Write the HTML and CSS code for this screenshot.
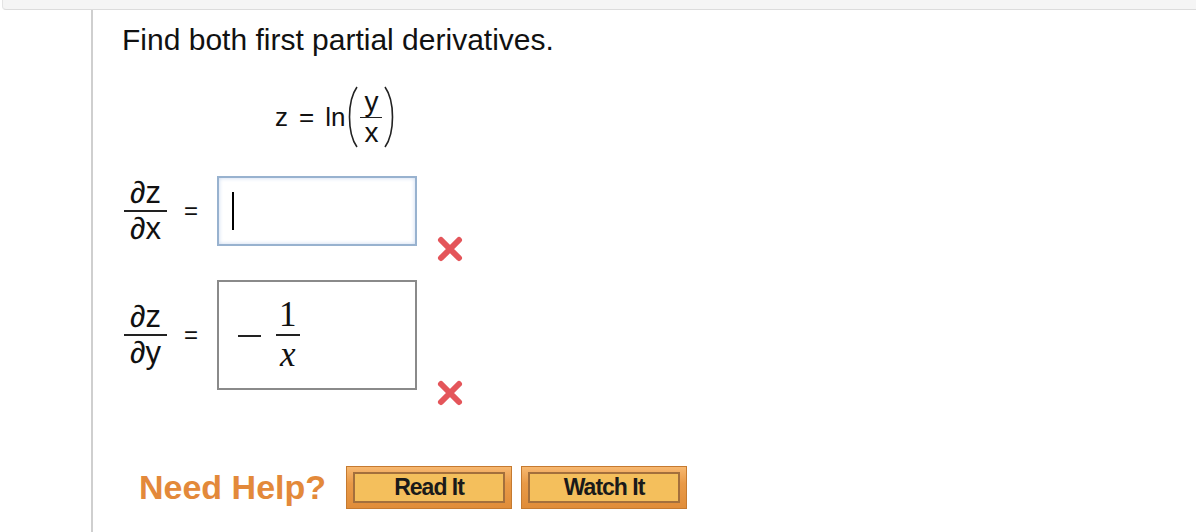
FILE: index.html
```html
<!DOCTYPE html>
<html>
<head>
<meta charset="utf-8">
<link rel="stylesheet" href="styles.css">
</head>
<body>
<div class="page">
  <div class="topbar"></div>
  <div class="main">
    <p class="question">Find both first partial derivatives.</p>
    <div class="equation">
      <span class="eq-z">z</span>
      <span class="eq-eq">=</span>
      <span class="eq-ln">ln</span>
      <svg class="paren" width="14" height="64" viewBox="0 0 14 64"><path d="M12 2 C2 16 2 48 12 62" fill="none" stroke="#222" stroke-width="1.6"/></svg>
      <span class="frac eq-frac">
        <span class="num">y</span>
        <span class="den">x</span>
      </span>
      <svg class="paren" width="14" height="64" viewBox="0 0 14 64"><path d="M2 2 C12 16 12 48 2 62" fill="none" stroke="#222" stroke-width="1.6"/></svg>
    </div>

    <div class="row row1">
      <span class="frac pd">
        <span class="num">∂z</span>
        <span class="den">∂x</span>
      </span>
      <span class="equals">=</span>
      <div class="box box-active"><span class="cursor"></span></div>
      <svg class="xmark" width="28" height="28" viewBox="0 0 28 28"><path d="M5 5 L23 23 M23 5 L5 23" stroke="#e4555a" stroke-width="6" stroke-linecap="round"/></svg>
    </div>

    <div class="row row2">
      <span class="frac pd">
        <span class="num">∂z</span>
        <span class="den">∂y</span>
      </span>
      <span class="equals">=</span>
      <div class="box box-answer">
        <span class="minus"></span>
        <span class="frac ans-frac">
          <span class="num">1</span>
          <span class="den">x</span>
        </span>
      </div>
      <svg class="xmark" width="28" height="28" viewBox="0 0 28 28"><path d="M5 5 L23 23 M23 5 L5 23" stroke="#e4555a" stroke-width="6" stroke-linecap="round"/></svg>
    </div>

    <div class="help">
      <span class="help-text">Need Help?</span>
      <span class="btn"><span class="btn-inner">Read It</span></span>
      <span class="btn"><span class="btn-inner">Watch It</span></span>
    </div>
  </div>
</div>
</body>
</html>
```

FILE: styles.css
```css
html, body {
  margin: 0;
  padding: 0;
  background: #fff;
  height: 100%;
  overflow: hidden;
}
.page {
  display: flex;
  flex-direction: column;
  height: 532px;
  font-family: "Liberation Sans", Arial, sans-serif;
  color: #111;
}
.topbar {
  height: 9px;
  margin-left: 2px;
  background: #f5f5f5;
  border-bottom: 1px solid #dcdcdc;
  border-left: 1px solid #e4e4e4;
  border-bottom-left-radius: 4px;
}
.main {
  flex: 1;
  margin-left: 91px;
  border-left: 2px solid #cfcfcf;
  padding-left: 29px;
  display: flex;
  flex-direction: column;
}
.question {
  margin: 13px 0 0 0;
  font-size: 30px;
  line-height: 34px;
}
.equation {
  display: flex;
  align-items: center;
  margin-top: 27px;
  margin-left: 153px;
  font-size: 26px;
  height: 66px;
}
.eq-z { margin-right: 11px; }
.eq-eq { margin-right: 11px; }
.eq-ln { margin-right: 0; }
.frac {
  display: inline-flex;
  flex-direction: column;
  align-items: center;
}
.frac .num {
  border-bottom: 2px solid #222;
  padding: 0 3px;
  text-align: center;
  align-self: stretch;
}
.eq-frac {
  font-size: 28px;
  line-height: 30px;
  margin: 0 1px;
}
.eq-frac .num { padding: 0 4px; border-bottom-width: 1.5px; }
.row {
  display: flex;
  align-items: center;
}
.row1 { margin-top: 26px; height: 70px; }
.row2 { margin-top: 34px; height: 110px; }
.pd {
  width: 43px;
  margin-left: 2px;
  font-size: 31px;
  line-height: 34px;
}
.pd .num { padding: 0; }
.equals {
  font-size: 24px;
  margin-left: 17px;
  margin-right: 19px;
}
.box {
  box-sizing: border-box;
  width: 200px;
  height: 100%;
  display: flex;
  align-items: center;
}
.box-active {
  border: 2px solid #98b2cf;
  box-shadow: inset 0 0 4px #c8d8ef;
  padding-left: 13px;
}
.cursor {
  width: 2px;
  height: 38px;
  background: #000;
}
.box-answer {
  border: 2px solid #8a8a8a;
  padding-left: 19px;
  font-family: "Liberation Serif", "Times New Roman", serif;
}
.minus {
  width: 23px;
  height: 2px;
  background: #222;
  margin-right: 15px;
  margin-top: 2px;
}
.ans-frac {
  font-size: 35px;
  line-height: 38px;
}
.ans-frac .num { padding: 0 3px; }
.ans-frac .den { font-style: italic; }
.xmark {
  align-self: flex-end;
  margin-left: 19px;
  margin-bottom: -17px;
}
.help {
  display: flex;
  align-items: center;
  margin-top: 76px;
  margin-left: 17px;
}
.help-text {
  font-size: 34px;
  font-weight: bold;
  color: #e3893a;
  margin-right: 20px;
}
.btn {
  box-sizing: border-box;
  width: 166px;
  height: 43px;
  padding: 5px 6px;
  margin-right: 9px;
  background: linear-gradient(#f7b870, #e99a47 40%, #e08d3a);
  border: 1px solid #c57a30;
  display: flex;
}
.btn-inner {
  flex: 1;
  border: 2px solid #a36f3c;
  background: #f4bf5c;
  display: flex;
  align-items: center;
  justify-content: center;
  font-size: 23px;
  font-weight: bold;
  color: #1a1a1a;
  letter-spacing: -1px;
}
```
